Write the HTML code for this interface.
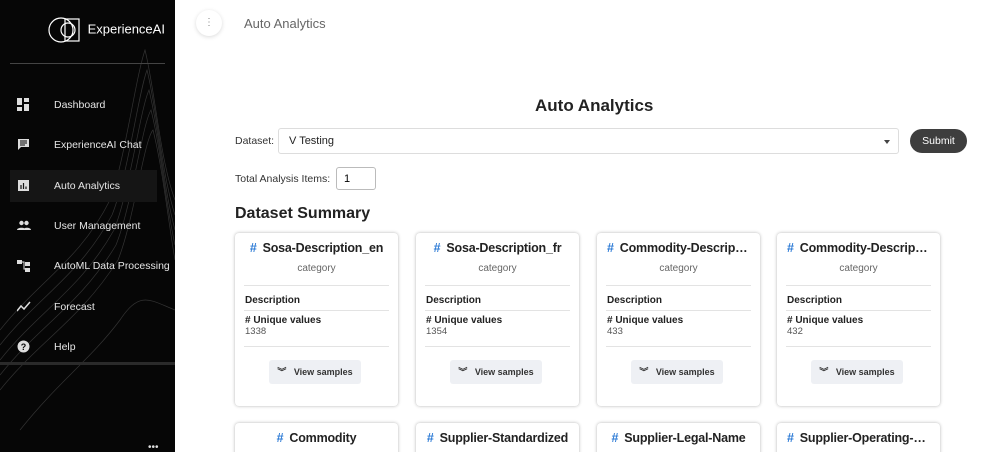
<!DOCTYPE html>
<html style="width:1000px;height:452px;overflow:hidden"><head><meta charset="utf-8"><style>
*{box-sizing:border-box;margin:0;padding:0}
body{width:1000px;height:452px;overflow:hidden;background:#fff;font-family:"Liberation Sans",sans-serif;position:relative}
.sb{position:absolute;left:0;top:0;width:175px;height:452px;background:#060606;overflow:hidden}
.sb svg.bg{position:absolute;left:0;top:0}
.logo{position:absolute;left:48px;top:16px;color:#fff;font-size:13px}
.sep{position:absolute;left:10px;top:63px;width:155px;height:1px;background:#444}
.nav{position:absolute;left:0;width:175px;height:32px;color:#e6e6e6;font-size:10.5px}
.nav span{position:absolute;left:54px;top:10px}
.nav svg{position:absolute;left:17px;top:9px}
.nav.act{left:10px;width:147px;background:#151515;}
.nav.act span{left:44px}.nav.act svg{left:7px}
.dots{position:absolute;left:196px;top:10px;width:26px;height:26px;border-radius:50%;box-shadow:0 1px 4px rgba(0,0,0,.15);color:#888;font-size:10px;text-align:center;line-height:26px}
.crumb{position:absolute;left:244px;top:16px;font-size:13px;color:#666}
h1{position:absolute;left:535px;top:96px;font-size:17px;font-weight:bold;color:#222}
.lbl{position:absolute;font-size:10.5px;color:#333}
.sel{position:absolute;left:278px;top:128px;width:621px;height:26px;border:1px solid #ddd;border-radius:3px;font-size:11px;color:#222;padding:6px 10px}
.sel:after{content:"";position:absolute;right:8px;top:11px;border:3.5px solid transparent;border-top:4px solid #444}
.btn{position:absolute;left:910px;top:129px;width:57px;height:24px;border-radius:12px;background:#3e3e3e;color:#fff;font-size:10.5px;text-align:center;line-height:24px}
.num{position:absolute;left:336px;top:167px;width:40px;height:23px;border:1px solid #bbb;border-radius:3px;font-size:11px;padding:5px 7px}
h2{position:absolute;left:235px;top:205px;font-size:16px;font-weight:bold;color:#222}
.card{position:absolute;width:163px;height:173px;border-radius:4px;box-shadow:0 0 3px rgba(0,0,0,.3);background:#fff;overflow:hidden}
.card.s{height:40px}
.t{position:absolute;left:0;right:0;top:8px;text-align:center;font-size:12.5px;font-weight:bold;color:#222;white-space:nowrap;overflow:hidden;text-overflow:ellipsis;padding:0 10px;letter-spacing:-0.2px}
.t b{color:#2d7bd6;margin-right:6px}
.c{position:absolute;left:0;right:0;top:30px;text-align:center;font-size:10px;color:#666}
.hr{position:absolute;left:9px;right:9px;height:1px;background:#e3e3e3}
.d{position:absolute;left:10px;font-size:10px;font-weight:bold;color:#222}
.v{position:absolute;left:10px;top:93px;font-size:9.5px;color:#555}
.vs{position:absolute;left:34px;top:127px;width:92px;height:24px;background:#eef0f4;border-radius:3px;font-size:9px;font-weight:bold;color:#333;text-align:center;line-height:24px}
</style></head><body>
<div class="sb">
<svg class="bg" width="175" height="452"><g fill="none" stroke="#333" stroke-width="0.7">
<path d="M0 330 C40 280 80 260 110 200 C125 160 135 80 145 50 C155 90 160 160 175 200"/>
<path d="M0 345 C40 295 80 275 112 215 C128 175 138 95 147 70 C157 110 162 175 175 215"/>
<path d="M0 360 C40 310 80 290 114 230 C130 190 140 110 149 90 C159 130 164 190 175 230"/>
<path d="M0 375 C40 325 80 305 116 245 C132 205 142 125 151 110 C161 150 166 205 175 245"/>
<path d="M0 390 C40 340 80 320 118 260 C134 220 144 140 153 130 C163 170 168 220 175 260"/>
<path d="M20 430 C60 380 90 360 120 320 C140 290 150 300 175 310"/>
</g><rect x="0" y="362" width="175" height="3" fill="#2a2a2a"/></svg>
<div class="logo"><svg width="36" height="28" style="vertical-align:middle" fill="none" stroke="#fff" stroke-width="1.2"><circle cx="13" cy="14" r="12"/><circle cx="20" cy="14" r="7"/><rect x="17" y="3" width="14" height="22"/></svg> ExperienceAI</div>
<div class="sep"></div>
<div class="nav" style="top:89px"><svg width="13" height="13" fill="#ddd"><rect x="0" y="0" width="5" height="7"/><rect x="7" y="0" width="5" height="4"/><rect x="7" y="6" width="5" height="7"/><rect x="0" y="9" width="5" height="4"/></svg><span>Dashboard</span></div>
<div class="nav" style="top:129px"><svg width="13" height="13" fill="#ddd"><path d="M1 1h11v8H4l-3 3z"/><path d="M3 3h7M3 5h7M3 7h5" stroke="#060606" stroke-width="1"/></svg><span>ExperienceAI Chat</span></div>
<div class="nav act" style="top:170px"><svg width="13" height="13"><rect x="1" y="1" width="11" height="11" fill="#ddd"/><path d="M4 10V6M6.5 10V4M9 10V7.5" stroke="#151515" stroke-width="1.2"/></svg><span>Auto Analytics</span></div>
<div class="nav" style="top:210px"><svg width="14" height="13" fill="#ddd"><circle cx="4.5" cy="4" r="2.2"/><circle cx="9.5" cy="4" r="2.2"/><path d="M0 11c0-3 9-3 9 0zM6 11c0-3 8-3 8 0z"/></svg><span>User Management</span></div>
<div class="nav" style="top:250px"><svg width="14" height="13" fill="#ddd"><rect x="0" y="1" width="5" height="4"/><rect x="8" y="3" width="5" height="4"/><rect x="8" y="9" width="5" height="4"/><path d="M5 3h2v7h1" stroke="#ddd" fill="none"/></svg><span>AutoML Data Processing</span></div>
<div class="nav" style="top:291px"><svg width="14" height="13"><path d="M0 11l4-5 3 3 6-7" stroke="#ddd" stroke-width="1.5" fill="none"/></svg><span>Forecast</span></div>
<div class="nav" style="top:331px"><svg width="13" height="13"><circle cx="6.5" cy="6.5" r="6" fill="#ddd"/><text x="6.5" y="10" font-size="9" font-weight="bold" text-anchor="middle" fill="#060606" font-family="Liberation Sans">?</text></svg><span>Help</span></div>
<div style="position:absolute;left:148px;top:442px;color:#ddd;font-size:10px">•••</div>
</div>
<div class="dots">⋮</div>
<div class="crumb">Auto Analytics</div>
<h1>Auto Analytics</h1>
<div class="lbl" style="left:235px;top:135px">Dataset:</div>
<div class="sel">V Testing</div>
<div class="btn">Submit</div>
<div class="lbl" style="left:235px;top:173px">Total Analysis Items:</div>
<div class="num">1</div>
<h2>Dataset Summary</h2>

<div class="card" style="left:235px;top:233px"><div class="t"><b>#</b>Sosa-Description_en</div><div class="c">category</div><div class="hr" style="top:52px"></div><div class="d" style="top:62px">Description</div><div class="hr" style="top:77px"></div><div class="d" style="top:82px"># Unique values</div><div class="v">1338</div><div class="hr" style="top:113px"></div><div class="vs">︾&nbsp;&nbsp; View samples</div></div>
<div class="card" style="left:416px;top:233px"><div class="t"><b>#</b>Sosa-Description_fr</div><div class="c">category</div><div class="hr" style="top:52px"></div><div class="d" style="top:62px">Description</div><div class="hr" style="top:77px"></div><div class="d" style="top:82px"># Unique values</div><div class="v">1354</div><div class="hr" style="top:113px"></div><div class="vs">︾&nbsp;&nbsp; View samples</div></div>
<div class="card" style="left:597px;top:233px"><div class="t"><b>#</b>Commodity-Description</div><div class="c">category</div><div class="hr" style="top:52px"></div><div class="d" style="top:62px">Description</div><div class="hr" style="top:77px"></div><div class="d" style="top:82px"># Unique values</div><div class="v">433</div><div class="hr" style="top:113px"></div><div class="vs">︾&nbsp;&nbsp; View samples</div></div>
<div class="card" style="left:777px;top:233px"><div class="t"><b>#</b>Commodity-Description</div><div class="c">category</div><div class="hr" style="top:52px"></div><div class="d" style="top:62px">Description</div><div class="hr" style="top:77px"></div><div class="d" style="top:82px"># Unique values</div><div class="v">432</div><div class="hr" style="top:113px"></div><div class="vs">︾&nbsp;&nbsp; View samples</div></div>

<div class="card s" style="left:235px;top:423px"><div class="t"><b>#</b>Commodity</div></div>
<div class="card s" style="left:416px;top:423px"><div class="t"><b>#</b>Supplier-Standardized</div></div>
<div class="card s" style="left:597px;top:423px"><div class="t"><b>#</b>Supplier-Legal-Name</div></div>
<div class="card s" style="left:777px;top:423px"><div class="t"><b>#</b>Supplier-Operating-Name</div></div>
</body></html>
